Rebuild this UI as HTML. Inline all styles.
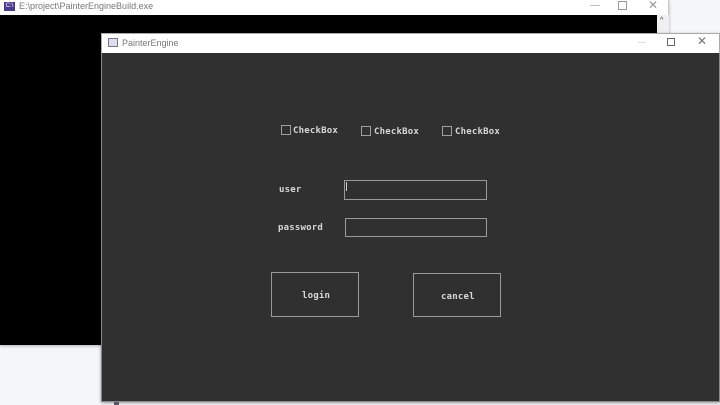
<!DOCTYPE html>
<html><head><meta charset="utf-8"><style>
*{margin:0;padding:0;box-sizing:border-box}
body{width:720px;height:405px;overflow:hidden;background:#f6f7fb;position:relative;font-family:"Liberation Sans",sans-serif}
.a{position:absolute}
.mono{font-family:"DejaVu Sans Mono","Liberation Mono",monospace;font-weight:bold;color:#d8d8d8;font-size:9px;letter-spacing:0.2px}
.cb{width:10px;height:10px;border:1px solid #a0a0a0}
.box{border:1px solid #9a9a9a}
</style></head><body>
<div class="a" style="left:0;top:0;width:669px;height:345px;background:#fff;border-right:1px solid #c8c8c8;box-shadow:0 1px 3px rgba(0,0,0,.3)"></div>
<div class="a" style="left:4px;top:2px;width:11px;height:9px;background:#4b3c8c;color:#fff;font-size:6px;line-height:9px;text-align:center">C:\</div>
<div class="a" style="left:19px;top:0;font-size:9px;line-height:13px;color:#777">E:\project\PainterEngineBuild.exe</div>
<div class="a" style="left:590px;top:0;font-size:10px;color:#999">—</div>
<div class="a" style="left:618px;top:1px;width:9px;height:9px;border:1px solid #999"></div>
<div class="a" style="left:648px;top:-2px;font-size:12px;color:#999">✕</div>
<div class="a" style="left:0;top:15px;width:657px;height:330px;background:#000"></div>
<div class="a" style="left:657px;top:15px;width:12px;height:330px;background:#f0f0f0"></div>
<div class="a" style="left:660px;top:17px;font-size:7px;color:#333">^</div>
<div class="a" style="left:101px;top:33px;width:619px;height:369px;background:#303030;border:1px solid #888;box-shadow:0 1px 3px rgba(0,0,0,.4)"></div>
<div class="a" style="left:101px;top:33px;width:619px;height:20px;background:#fff;border:1px solid #aaa;border-bottom:none"></div>
<div class="a" style="left:108px;top:38px;width:10px;height:9px;border:1px solid #778;background:#dde"></div>
<div class="a" style="left:122px;top:37px;font-size:9px;line-height:12px;color:#777">PainterEngine</div>
<div class="a" style="left:638px;top:42px;width:8px;height:1px;background:#ddd"></div>
<div class="a" style="left:667px;top:38px;width:8px;height:8px;border:1px solid #666"></div>
<div class="a" style="left:697px;top:34px;font-size:12px;color:#777">✕</div>
<div class="a cb" style="left:281px;top:125px"></div><div class="a mono" style="left:293px;top:126px">CheckBox</div>
<div class="a cb" style="left:361px;top:126px"></div><div class="a mono" style="left:374px;top:127px">CheckBox</div>
<div class="a cb" style="left:442px;top:126px"></div><div class="a mono" style="left:455px;top:127px">CheckBox</div>
<div class="a mono" style="left:279px;top:185px">user</div>
<div class="a box" style="left:344px;top:180px;width:143px;height:20px"></div>
<div class="a" style="left:346px;top:182px;width:1px;height:9px;background:#ccc"></div>
<div class="a mono" style="left:278px;top:223px">password</div>
<div class="a box" style="left:345px;top:218px;width:142px;height:19px"></div>
<div class="a box" style="left:271px;top:272px;width:88px;height:45px"></div>
<div class="a mono" style="left:302px;top:291px">login</div>
<div class="a box" style="left:413px;top:273px;width:88px;height:44px"></div>
<div class="a mono" style="left:441px;top:292px">cancel</div>
<div class="a" style="left:114px;top:402px;width:5px;height:3px;background:#556"></div>
</body></html>
